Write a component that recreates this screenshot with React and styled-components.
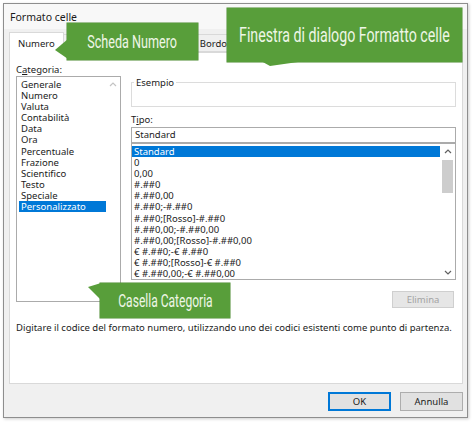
import React from 'react';
import styled, { createGlobalStyle } from 'styled-components';

const GlobalStyle = createGlobalStyle`
  html, body { margin: 0; background: #fff; }
  body {
    font-family: "Noto Sans", "Open Sans", sans-serif;
    color: #1b1b1b;
  }
`;

const Page = styled.div`
  position: relative;
  width: 474px;
  height: 423px;
  padding: 3px 0 0 3px;
  box-sizing: border-box;
  overflow: hidden;
`;

const Dialog = styled.div`
  width: 465px;
  height: 415px;
  box-sizing: border-box;
  border: 1px solid #8e8e8e;
  background: #f0f0f0;
  box-shadow: 1px 1px 3px rgba(0, 0, 0, 0.2);
  display: flex;
  flex-direction: column;
`;

const TitleBar = styled.div`
  height: 25px;
  flex: none;
  display: flex;
  align-items: center;
  padding-left: 6px;
  background: #f8f8f8;
  font-size: 10.5px;
`;

const TabStrip = styled.div`
  height: 23px;
  flex: none;
  display: flex;
  align-items: flex-end;
  padding-left: 5px;
  position: relative;
  z-index: 1;
`;

const Tab = styled.div`
  box-sizing: border-box;
  flex: none;
  width: ${p => (p.$w ? `${p.$w}px` : 'auto')};
  height: ${p => (p.$active ? 21 : 18)}px;
  margin-bottom: ${p => (p.$active ? -1 : 0)}px;
  padding: 0 ${p => (p.$active ? 8 : 6)}px;
  display: flex;
  align-items: center;
  font-size: 9.5px;
  background: ${p => (p.$active ? '#fff' : '#f0f0f0')};
  border: 1px solid #d9d9d9;
  border-bottom: ${p => (p.$active ? 'none' : '1px solid #d9d9d9')};
  border-left: ${p => (p.$first ? '1px solid #d9d9d9' : 'none')};
`;

const Panel = styled.div`
  flex: 1;
  margin: 0 4px 0 5px;
  background: #fff;
  border: 1px solid #d9d9d9;
  padding: 10px 6px 0 6px;
  display: flex;
  flex-direction: column;
  font-size: 9.5px;
`;

const Columns = styled.div`
  display: flex;
  gap: 10px;
`;

const LeftCol = styled.div`
  width: 105px;
  display: flex;
  flex-direction: column;
`;

const RightCol = styled.div`
  width: 325px;
  display: flex;
  flex-direction: column;
`;

const Label = styled.div`
  line-height: 13px;
  height: 13px;
  margin-top: ${p => p.$top || 0}px;
`;

const ListBox = styled.div`
  box-sizing: border-box;
  height: ${p => p.$h}px;
  border: 1px solid #ababab;
  display: flex;
`;

const Items = styled.div`
  flex: 1;
  padding: 2px 0 0 ${p => p.$inset}px;
  overflow: hidden;
`;

const Item = styled.div`
  line-height: 11.1px;
  height: 11.1px;
  padding-left: ${p => p.$pad}px;
  white-space: nowrap;
  background: ${p => (p.$sel ? '#0078d7' : 'transparent')};
  color: ${p => (p.$sel ? '#fff' : 'inherit')};
`;

const ScrollBar = styled.div`
  width: ${p => p.$w}px;
  flex: none;
  display: flex;
  flex-direction: column;
`;

const Arrow = styled.div`
  height: 14px;
  display: flex;
  align-items: center;
  justify-content: center;
`;

const Track = styled.div`
  flex: 1;
  display: flex;
  justify-content: center;
`;

const Thumb = styled.div`
  width: 11px;
  height: 33px;
  margin-top: 2px;
  background: #cdcdcd;
`;

const Group = styled.fieldset`
  margin: 14px 0 0 0;
  padding: 0;
  height: 30px;
  box-sizing: border-box;
  border: 1px solid #dcdcdc;
`;

const Legend = styled.legend`
  padding: 0 2px;
  margin-left: 2px;
  line-height: 11px;
  font-size: 9.5px;
`;

const TypeInput = styled.div`
  box-sizing: border-box;
  height: 16px;
  margin-top: 1px;
  border: 1px solid #ababab;
  padding-left: 3px;
  line-height: 14px;
`;

const Button = styled.div`
  box-sizing: border-box;
  width: ${p => p.$w}px;
  height: ${p => p.$h}px;
  display: flex;
  align-items: center;
  justify-content: center;
  font-size: 9.5px;
  background: #e1e1e1;
  border: 1px solid ${p => (p.$primary ? '#0078d7' : '#adadad')};
  box-shadow: ${p => (p.$primary ? 'inset 0 0 0 1px #0078d7' : 'none')};
  color: ${p => (p.$disabled ? '#a3a3a3' : '#1b1b1b')};
  ${p => p.$disabled && 'background: #e6e6e6; border-color: #cfcfcf;'}
`;

const ActionRow = styled.div`
  display: flex;
  justify-content: flex-end;
  margin-top: 11px;
  padding-right: 2px;
`;

const Description = styled.div`
  margin-top: 13px;
  line-height: 13px;
  white-space: nowrap;
`;

const Footer = styled.div`
  height: 33px;
  flex: none;
  display: flex;
  justify-content: flex-end;
  align-items: flex-start;
  padding: 8px 4px 0 0;
  box-sizing: border-box;
  gap: 9px;
`;

const Callout = styled.div`
  position: absolute;
  left: ${p => p.$x}px;
  top: ${p => p.$y}px;
  width: ${p => p.$w}px;
  height: ${p => p.$h}px;
  background: #589e3a;
  box-shadow: 0 0 0 0.5px #4a8a2f;
  display: flex;
  align-items: center;
  justify-content: center;
  z-index: 5;
`;

const Pointer = styled.svg`
  position: absolute;
  left: 0;
  top: 0;
  overflow: visible;
`;

const CalloutText = styled.span`
  display: inline-block;
  font-family: Roboto, "Open Sans", sans-serif;
  font-size: ${p => p.$size}px;
  color: #eef6e6;
  transform: scaleX(${p => p.$sx});
  white-space: nowrap;
`;

const Chevron = ({ down, color = '#606060' }) => (
  <svg width="8" height="5" viewBox="0 0 8 5">
    <path
      d={down ? 'M1 1 L4 4 L7 1' : 'M1 4 L4 1 L7 4'}
      fill="none"
      stroke={color}
      strokeWidth="1.2"
    />
  </svg>
);

const categories = [
  'Generale', 'Numero', 'Valuta', 'Contabilità', 'Data', 'Ora',
  'Percentuale', 'Frazione', 'Scientifico', 'Testo', 'Speciale', 'Personalizzato',
];

const formats = [
  'Standard', '0', '0,00', '#.##0', '#.##0,00', '#.##0;-#.##0',
  '#.##0;[Rosso]-#.##0', '#.##0,00;-#.##0,00', '#.##0,00;[Rosso]-#.##0,00',
  '€ #.##0;-€ #.##0', '€ #.##0;[Rosso]-€ #.##0', '€ #.##0,00;-€ #.##0,00',
];

// tabs hidden behind the callouts keep their size but show no label
const tabs = [
  { name: 'Numero', shown: true },
  { name: 'Allineamento', w: 74 },
  { name: 'Carattere', w: 56 },
  { name: 'Bordo', shown: true },
  { name: 'Riempimento', w: 70 },
  { name: 'Protezione', w: 60 },
];

export default function App() {
  return (
    <Page>
      <GlobalStyle />
      <Dialog>
        <TitleBar>Formato celle</TitleBar>
        <TabStrip>
          {tabs.map((t, i) => (
            <Tab key={t.name} title={t.name} $w={t.w} $active={i === 0} $first={i === 0}>
              {t.shown ? t.name : null}
            </Tab>
          ))}
        </TabStrip>
        <Panel>
          <Columns>
            <LeftCol>
              <Label>C<u>a</u>tegoria:</Label>
              <ListBox $h={226}>
                <Items $inset={2}>
                  {categories.map((c, i) => (
                    <Item key={c} $pad={2} $sel={i === categories.length - 1}>{c}</Item>
                  ))}
                </Items>
                <ScrollBar $w={14}>
                  <Arrow><Chevron color="#c4c4c4" /></Arrow>
                </ScrollBar>
              </ListBox>
            </LeftCol>
            <RightCol>
              <Group>
                <Legend>Esempio</Legend>
              </Group>
              <Label $top={6}>T<u>i</u>po:</Label>
              <TypeInput>Standard</TypeInput>
              <ListBox $h={137}>
                <Items $inset={0}>
                  {formats.map((f, i) => (
                    <Item key={f} $pad={2} $sel={i === 0}>{f}</Item>
                  ))}
                </Items>
                <ScrollBar $w={15}>
                  <Arrow><Chevron /></Arrow>
                  <Track><Thumb /></Track>
                  <Arrow><Chevron down /></Arrow>
                </ScrollBar>
              </ListBox>
              <ActionRow>
                <Button $w={62} $h={17} $disabled>Elimina</Button>
              </ActionRow>
            </RightCol>
          </Columns>
          <Description>
            Digitare il codice del formato numero, utilizzando uno dei codici esistenti come punto di partenza.
          </Description>
        </Panel>
        <Footer>
          <Button $w={63} $h={19} $primary>OK</Button>
          <Button $w={63} $h={19}>Annulla</Button>
        </Footer>
      </Dialog>

      <Callout $x={67} $y={23} $w={131} $h={37}>
        <Pointer width="1" height="1">
          <polygon points="1,16 -12,27 1,36" fill="#589e3a" />
        </Pointer>
        <CalloutText $size={18} $sx={0.7}>Scheda Numero</CalloutText>
      </Callout>
      <Callout $x={227} $y={8} $w={235} $h={54}>
        <Pointer width="1" height="1">
          <polygon points="34,53 43,58 78,53" fill="#589e3a" />
        </Pointer>
        <CalloutText $size={20} $sx={0.71}>Finestra di dialogo Formatto celle</CalloutText>
      </Callout>
      <Callout $x={100} $y={283} $w={130} $h={35}>
        <Pointer width="1" height="1">
          <polygon points="1,0 -12,4 1,17" fill="#589e3a" />
        </Pointer>
        <CalloutText $size={18} $sx={0.67}>Casella Categoria</CalloutText>
      </Callout>
    </Page>
  );
}
